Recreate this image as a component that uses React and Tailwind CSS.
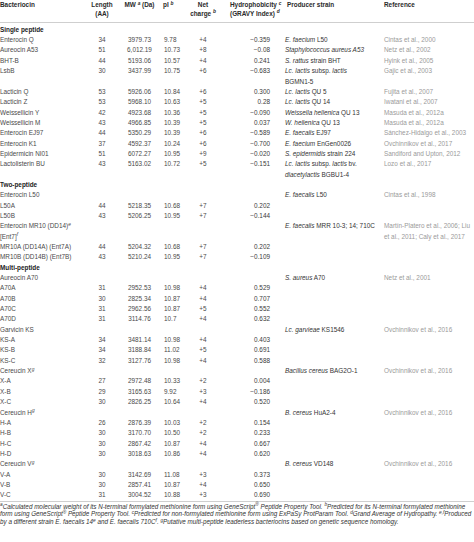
import React from 'react';

const I = ({ children }) => <span className="italic">{children}</span>;
const S = ({ children }) => <sup className="italic">{children}</sup>;

const single = [
  ['Enterocin Q', '34', '3979.73', '9.78', '+4', '−0.359', <><I>E. faecium</I> L50</>, 'Cintas et al., 2000'],
  ['Aureocin A53', '51', '6,012.19', '10.73', '+8', '−0.08', <I>Staphylococcus aureus A53</I>, 'Netz et al., 2002'],
  ['BHT-B', '44', '5193.06', '10.57', '+4', '0.241', <><I>S. rattus</I> strain BHT</>, 'Hyink et al., 2005'],
  ['LsbB', '30', '3437.99', '10.75', '+6', '−0.683', <><I>Lc. lactis</I> subsp. <I>lactis</I><br />BGMN1-5</>, 'Gajic et al., 2003'],
  ['Lacticin Q', '53', '5926.06', '10.84', '+6', '0.300', <><I>Lc. lactis</I> QU 5</>, 'Fujita et al., 2007'],
  ['Lacticin Z', '53', '5968.10', '10.63', '+5', '0.28', <><I>Lc. lactis</I> QU 14</>, 'Iwatani et al., 2007'],
  ['Weissellicin Y', '42', '4923.68', '10.36', '+5', '−0.090', <><I>Weissella hellenica</I> QU 13</>, 'Masuda et al., 2012a'],
  ['Weissellicin M', '43', '4966.85', '10.39', '+5', '0.037', <><I>W. hellenica</I> QU 13</>, 'Masuda et al., 2012a'],
  ['Enterocin EJ97', '44', '5350.29', '10.39', '+6', '−0.589', <><I>E. faecalis</I> EJ97</>, 'Sánchez-Hidalgo et al., 2003'],
  ['Enterocin K1', '37', '4592.37', '10.24', '+6', '−0.700', <><I>E. faecium</I> EnGen0026</>, 'Ovchinnikov et al., 2017'],
  ['Epidermicin NI01', '51', '6072.27', '10.95', '+9', '−0.020', <><I>S. epidermidis</I> strain 224</>, 'Sandiford and Upton, 2012'],
  ['Lactolisterin BU', '43', '5163.02', '10.72', '+5', '−0.151', <><I>Lc. lactis</I> subsp. <I>lactis</I> bv.<br /><I>diacetylactis</I> BGBU1-4</>, 'Lozo et al., 2017'],
];

const two = [
  ['Enterocin L50', '', '', '', '', '', <><I>E. faecalis</I> L50</>, 'Cintas et al., 1998'],
  ['L50A', '44', '5218.35', '10.68', '+7', '0.202'],
  ['L50B', '43', '5206.25', '10.95', '+7', '−0.144'],
  [<>Enterocin MR10 (DD14)<S>e</S><br />[Ent7]<S>f</S></>, '', '', '', '', '', <><I>E. faecalis</I> MRR 10-3; 14; 710C</>, <>{'Martín-Platero et al., 2006; Liu'}<br />et al., 2011; Caly et al., 2017</>],
  ['MR10A (DD14A) (Ent7A)', '44', '5204.32', '10.68', '+7', '0.202'],
  ['MR10B (DD14B) (Ent7B)', '43', '5210.24', '10.95', '+7', '−0.109'],
];

const multi = [
  ['Aureocin A70', '', '', '', '', '', <><I>S. aureus</I> A70</>, 'Netz et al., 2001'],
  ['A70A', '31', '2952.53', '10.98', '+4', '0.529'],
  ['A70B', '30', '2825.34', '10.87', '+4', '0.707'],
  ['A70C', '31', '2962.56', '10.87', '+5', '0.552'],
  ['A70D', '31', '3114.76', '10.7', '+4', '0.632'],
  ['Garvicin KS', '', '', '', '', '', <><I>Lc. garvieae</I> KS1546</>, 'Ovchinnikov et al., 2016'],
  ['KS-A', '34', '3481.14', '10.98', '+4', '0.403'],
  ['KS-B', '34', '3188.84', '11.02', '+5', '0.691'],
  ['KS-C', '32', '3127.76', '10.98', '+4', '0.588'],
  [<>Cereucin X<S>g</S></>, '', '', '', '', '', <><I>Bacillus cereus</I> BAG2O-1</>, 'Ovchinnikov et al., 2016'],
  ['X-A', '27', '2972.48', '10.33', '+2', '0.004'],
  ['X-B', '29', '3165.63', '9.92', '+3', '−0.186'],
  ['X-C', '30', '2826.25', '10.64', '+4', '0.520'],
  [<>Cereucin H<S>g</S></>, '', '', '', '', '', <><I>B. cereus</I> HuA2-4</>, 'Ovchinnikov et al., 2016'],
  ['H-A', '26', '2876.39', '10.03', '+2', '0.154'],
  ['H-B', '30', '3170.70', '10.50', '+2', '0.233'],
  ['H-C', '30', '2867.42', '10.87', '+4', '0.667'],
  ['H-D', '30', '3018.63', '10.86', '+4', '0.620'],
  [<>Cereucin V<S>g</S></>, '', '', '', '', '', <><I>B. cereus</I> VD148</>, 'Ovchinnikov et al., 2016'],
  ['V-A', '30', '3142.69', '11.08', '+3', '0.373'],
  ['V-B', '30', '2857.41', '10.87', '+4', '0.650'],
  ['V-C', '31', '3004.52', '10.88', '+3', '0.690'],
];

const Row = ({ cells }) => {
  const [name, len, mw, pi, charge, hyd, prod, ref] = cells;
  return (
    <div className="flex leading-[10.34px] whitespace-nowrap">
      <div className="w-[88px] shrink-0 text-[#4a4a4a]">{name}</div>
      <div className="w-[28px] shrink-0 text-center text-[#4a4a4a]">{len}</div>
      <div className="w-[47px] shrink-0 text-center text-[#4a4a4a]">{mw}</div>
      <div className="w-[27px] shrink-0 pl-px text-[#4a4a4a]">{pi}</div>
      <div className="w-[26px] shrink-0 text-center text-[#4a4a4a]">{charge}</div>
      <div className="w-[68px] shrink-0 pr-[14px] text-right text-[#3a3a3a]">{hyd}</div>
      <div className="w-[98px] shrink-0 pl-px text-[#333]">{prod}</div>
      <div className="flex-1 pl-[2px] text-[#9a9a9a]">{ref}</div>
    </div>
  );
};

const Section = ({ title }) => (
  <div className="leading-[10.34px] font-bold text-[#222]">{title}</div>
);

export default function App() {
  return (
    <div className="w-[474px] h-[542px] overflow-hidden bg-white font-['Liberation_Sans',Arial,sans-serif] text-[6.4px]">
      {/* header */}
      <div className="flex pt-px leading-[8.5px] font-bold text-[#2a2a2a] whitespace-nowrap">
        <div className="w-[88px] shrink-0">Bacteriocin</div>
        <div className="w-[28px] shrink-0 text-center">Length<br />(AA)</div>
        <div className="w-[47px] shrink-0 text-center">MW <S>a</S> (Da)</div>
        <div className="w-[27px] shrink-0">pI <S>b</S></div>
        <div className="w-[26px] shrink-0 text-center">Net<br />charge <S>b</S></div>
        <div className="w-[68px] shrink-0 pl-[14px]">Hydrophobicity <S>c</S><br />(GRAVY Index) <S>d</S></div>
        <div className="w-[98px] shrink-0 pl-[3px]">Producer strain</div>
        <div className="flex-1 pl-[2px]">Reference</div>
      </div>
      <div className="mt-[4px] h-px bg-[#cfcfcf]" />
      <div className="pt-[1.8px]">
        <Section title="Single peptide" />
        {single.map((r, i) => <Row key={'s' + i} cells={r} />)}
        <Section title="Two-peptide" />
        {two.map((r, i) => <Row key={'t' + i} cells={r} />)}
        <Section title="Multi-peptide" />
        {multi.map((r, i) => <Row key={'m' + i} cells={r} />)}
      </div>
      <div className="h-px bg-[#cfcfcf]" />
      <div className="pt-px italic text-[#333] text-[6.3px] leading-[7.8px] whitespace-nowrap">
        <div><S>a</S>Calculated molecular weight of its N-terminal formylated methionine form using GeneScript<S>®</S> Peptide Property Tool. <S>b</S>Predicted for its N-terminal formylated methionine</div>
        <div>form using GeneScript<S>®</S> Peptide Property Tool. <S>c</S>Predicted for non-formylated methionine form using ExPaSy ProtParam Tool. <S>d</S>Grand Average of Hydropathy. <S>e,f</S>Produced</div>
        <div>by a different strain E. faecalis 14<S>e</S> and E. faecalis 710C<S>f</S>. <S>g</S>Putative multi-peptide leaderless bacteriocins based on genetic sequence homology.</div>
      </div>
    </div>
  );
}
